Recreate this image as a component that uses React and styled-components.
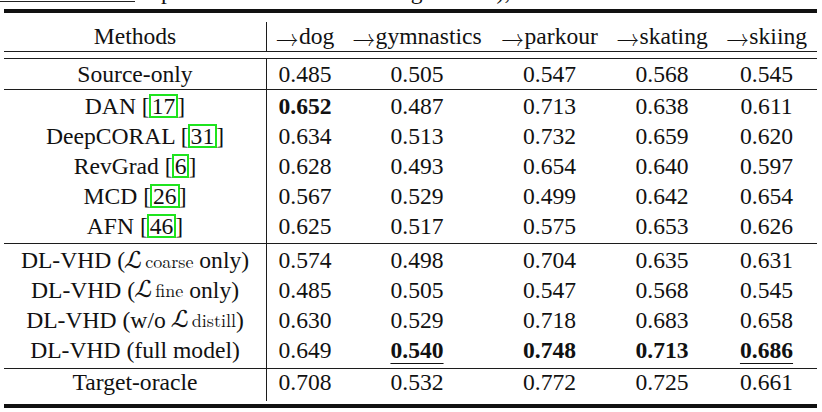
import React from 'react';
import styled, { createGlobalStyle, css } from 'styled-components';

const Global = createGlobalStyle`
  html, body { margin: 0; padding: 0; background: #fff; }
  body { font-family: 'Liberation Serif', 'Times New Roman', serif; }
`;

const Page = styled.div`
  width: 822px;
  height: 412px;
  overflow: hidden;
  background: #fff;
  color: #111;
  font-family: 'Liberation Serif', 'Times New Roman', serif;
  font-size: 23.6px;
`;

const Caption = styled.div`
  height: 9px;
  overflow: hidden;
  display: flex;
  align-items: flex-start;
`;

const CaptionUnderline = styled.span`
  flex: none;
  width: ${(p) => p.$w}px;
  height: 1px;
  border-bottom: 1px solid #222;
`;

const CaptionText = styled.span`
  flex: none;
  margin-top: -22px;
  margin-left: ${(p) => p.$gap}px;
  line-height: normal;
  white-space: pre;
`;

const Table = styled.div`
  margin-left: 4px;
  width: 813px;
`;

const ThickRule = styled.div`
  height: 4px;
  background: #111;
  margin-top: ${(p) => p.$mt || 0}px;
`;

const ThinRule = styled.div`
  height: 1px;
  background: #1c1c1c;
  margin-top: ${(p) => p.$mt || 0}px;
`;

const Row = styled.div`
  display: grid;
  grid-template-columns: 263px 76px 148px 117px 108px 101px;
  height: ${(p) => p.$h}px;
  margin-top: ${(p) => p.$mt || 0}px;
  & > * {
    padding-top: ${(p) => p.$pt || 0}px;
    padding-bottom: ${(p) => p.$pb || 0}px;
  }
`;

const Cell = styled.div`
  display: flex;
  align-items: center;
  justify-content: center;
  white-space: pre;
  ${(p) =>
    p.$divider &&
    css`
      border-right: 1px solid #1c1c1c;
    `}
`;

const Arrow = styled.span`
  font-family: 'Latin Modern Roman', 'Liberation Serif', serif;
  font-size: 23.4px;
  line-height: 0;
`;

const Num = styled.span`
  font-weight: ${(p) => (p.$bold ? 700 : 400)};
  ${(p) =>
    p.$under &&
    css`
      text-decoration: underline;
      text-decoration-thickness: 1.4px;
      text-underline-offset: 5px;
    `}
`;

const CiteBox = styled.span`
  display: inline-block;
  line-height: 20px;
  border: 2px solid #1ee41e;
  padding: 0 1px;
  margin: 0 -1px;
`;

const MathL = styled.span`
  font-family: 'STIX Two Text', 'Latin Modern Roman', serif;
  font-size: 26px;
  line-height: 0;
  margin-right: 2px;
`;

const Sub = styled.span`
  font-family: 'Latin Modern Roman', 'Liberation Serif', serif;
  font-size: 18px;
  vertical-align: -5px;
  line-height: 0;
`;

const headers = ['dog', 'gymnastics', 'parkour', 'skating', 'skiing'];

const Cite = ({ name, n }) => (
  <>
    {name + ' ['}
    <CiteBox>{n}</CiteBox>]
  </>
);

const Loss = ({ sub }) => (
  <>
    <MathL>ℒ</MathL>
    <Sub>{sub}</Sub>
  </>
);

const groups = [
  {
    rows: [{ label: 'Source-only', vals: ['0.485', '0.505', '0.547', '0.568', '0.545'] }],
  },
  {
    rows: [
      { label: <Cite name="DAN" n="17" />, vals: ['*0.652', '0.487', '0.713', '0.638', '0.611'] },
      { label: <Cite name="DeepCORAL" n="31" />, vals: ['0.634', '0.513', '0.732', '0.659', '0.620'] },
      { label: <Cite name="RevGrad" n="6" />, vals: ['0.628', '0.493', '0.654', '0.640', '0.597'] },
      { label: <Cite name="MCD" n="26" />, vals: ['0.567', '0.529', '0.499', '0.642', '0.654'] },
      { label: <Cite name="AFN" n="46" />, vals: ['0.625', '0.517', '0.575', '0.653', '0.626'] },
    ],
  },
  {
    rows: [
      {
        label: (
          <>
            {'DL-VHD ('}
            <Loss sub="coarse" />
            {' only)'}
          </>
        ),
        vals: ['0.574', '0.498', '0.704', '0.635', '0.631'],
      },
      {
        label: (
          <>
            {'DL-VHD ('}
            <Loss sub="fine" />
            {' only)'}
          </>
        ),
        vals: ['0.485', '0.505', '0.547', '0.568', '0.545'],
      },
      {
        label: (
          <>
            {'DL-VHD (w/o '}
            <Loss sub="distill" />
            {')'}
          </>
        ),
        vals: ['0.630', '0.529', '0.718', '0.683', '0.658'],
      },
      {
        label: 'DL-VHD (full model)',
        vals: ['0.649', '_0.540', '*0.748', '*0.713', '_0.686'],
      },
    ],
  },
  {
    rows: [{ label: 'Target-oracle', vals: ['0.708', '0.532', '0.772', '0.725', '0.661'] }],
  },
];

// row geometry per group: [height, paddingTop, paddingBottom]
const geometry = [
  [[30, 0, 0]],
  [[31, 1, 0], [30, 0, 0], [30, 0, 0], [30, 0, 0], [32, 0, 2]],
  [[31, 2, 0], [30, 0, 0], [30, 0, 0], [33, 0, 3]],
  [[30, 0, 5]],
];

const Value = ({ v }) => {
  const bold = v[0] === '*' || v[0] === '_';
  const under = v[0] === '_';
  const text = bold ? v.slice(1) : v;
  return (
    <Num $bold={bold} $under={under}>
      {text}
    </Num>
  );
};

export default function App() {
  return (
    <Page>
      <Global />
      <Caption>
        <CaptionUnderline $w={135} />
        <CaptionText $gap={26}>p</CaptionText>
        <CaptionText $gap={238}>g</CaptionText>
        <CaptionText $gap={74}>),</CaptionText>
      </Caption>
      <Table>
        <ThickRule />
        <Row $h={29} $mt={9}>
          <Cell $divider>Methods</Cell>
          {headers.map((h) => (
            <Cell key={h}>
              <Arrow>→</Arrow>
              {h}
            </Cell>
          ))}
        </Row>
        <ThinRule />
        <ThinRule $mt={6} />
        {groups.map((g, gi) => (
          <React.Fragment key={gi}>
            {gi > 0 && <ThinRule />}
            {g.rows.map((r, ri) => {
              const [h, pt, pb] = geometry[gi][ri];
              return (
                <Row key={ri} $h={h} $pt={pt} $pb={pb}>
                  <Cell $divider>{r.label}</Cell>
                  {r.vals.map((v, vi) => (
                    <Cell key={vi}>
                      <Value v={v} />
                    </Cell>
                  ))}
                </Row>
              );
            })}
          </React.Fragment>
        ))}
        <ThickRule $mt={5} />
      </Table>
    </Page>
  );
}
